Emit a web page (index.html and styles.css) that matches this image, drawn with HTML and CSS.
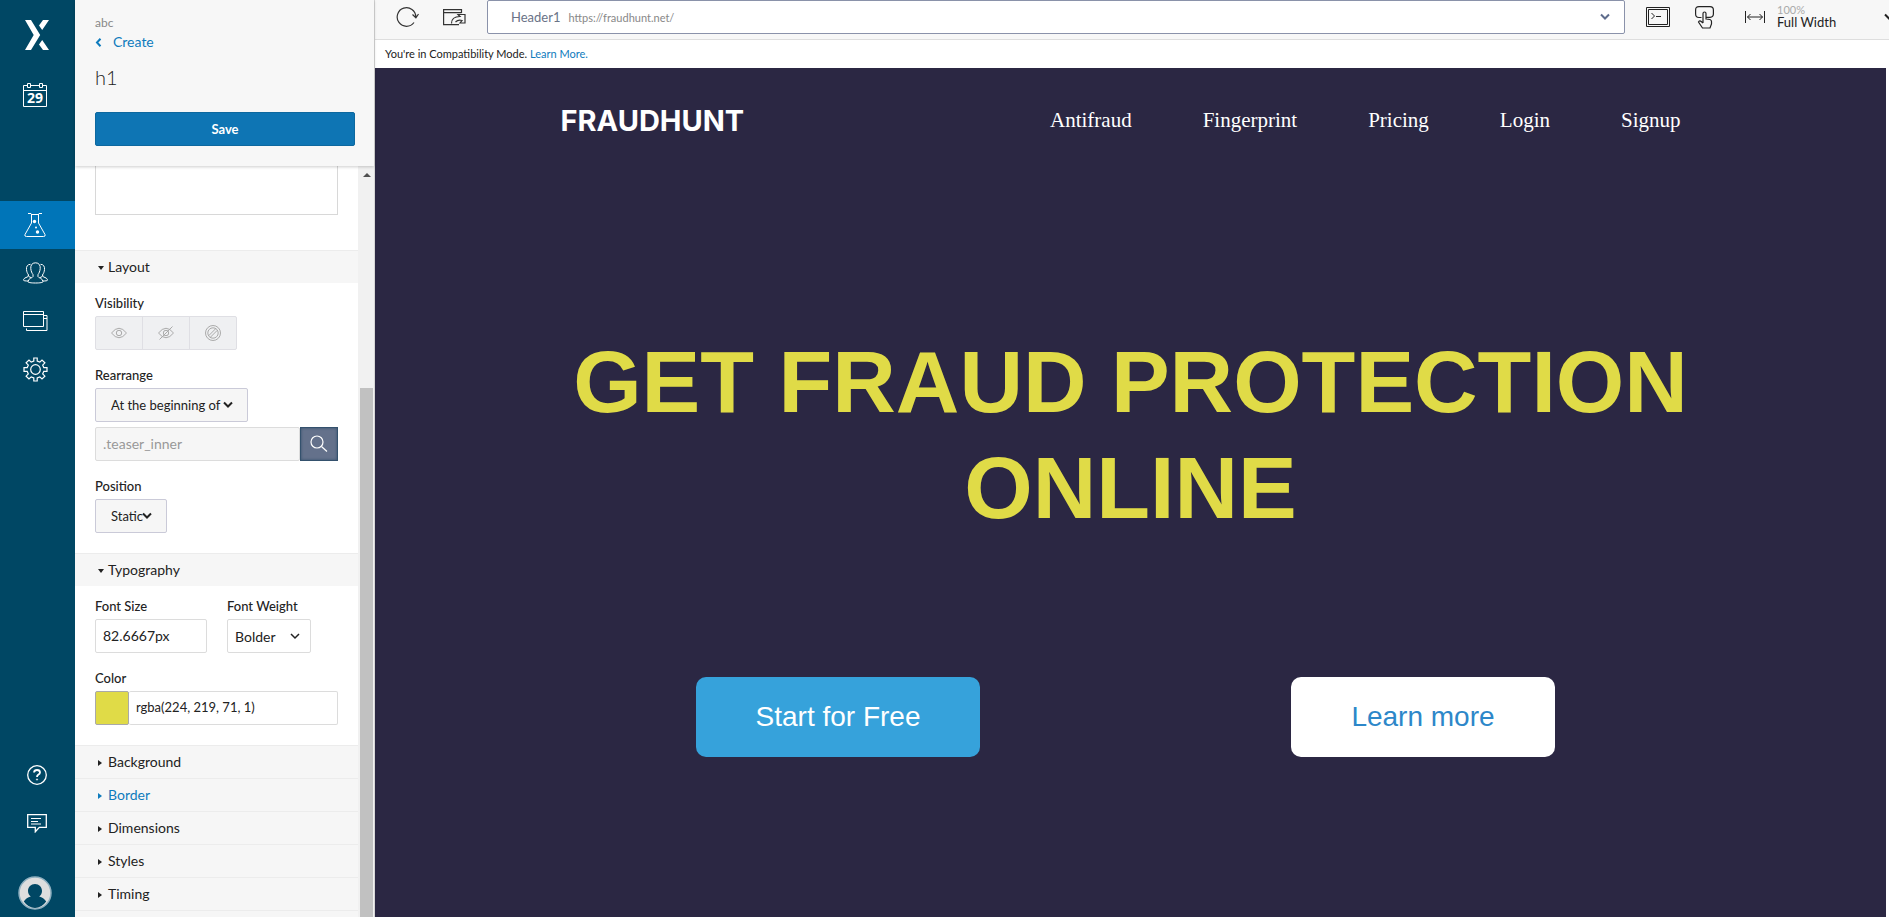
FILE: index.html
```
<!DOCTYPE html>
<html lang="en">
<head>
    <meta charset="UTF-8">
    <meta name="viewport" content="width=device-width, initial-scale=1.0">
    <title>Create - h1</title>
    <link rel="stylesheet" href="styles.css">
</head>
<body>
    <nav class="sidebar" aria-label="Main">
        <a class="logo" href="#" aria-label="Home">
            <svg width="24" height="30" viewBox="0 0 24 30" fill="#fff"><path d="M0 0h6L15.200 15 6 30H0l8.700-15zM18 0h6l-6.800 10-3.200-4.500zM18 30h6l-6.800-10-3.200 4.500z"/></svg>
        </a>
        <a class="calendar" href="#" aria-label="Calendar">
            <svg width="24" height="25" viewBox="0 0 24 25" fill="none" stroke="#fff"><path d="M4.500 2.500h-4v21h23v-21h-4M7.500 2.500h9M.5 7.500h23M4.500.5h3v4h-3zM16.500.5h3v4h-3z"/><text class="calendar-day" x="12" y="20" text-anchor="middle">29</text></svg>
        </a>
        <a class="side-link active" href="#" aria-label="Experiments">
            <svg width="24" height="26" viewBox="0 0 24 26" fill="none" stroke="#fff"><path d="M5 1.500h3l1 1h6l1-1h3M8.500 2v9L2 22.500q-.8 2 1.500 2h17q2.300 0 1.500-2L15.500 11V2"/><g fill="#fff" stroke="none"><circle cx="11.500" cy="9.500" r="1.700"/><circle cx="13" cy="15.500" r="1"/><circle cx="14.500" cy="20" r="1.700"/></g></svg>
        </a>
        <a class="side-link" href="#" aria-label="Audiences">
            <svg width="25" height="22" viewBox="0 0 25 22" fill="none" stroke="#fff"><path d="M12.500.8c3.500 0 5 2.500 4.700 5.800-.2 2.500-1.200 4.700-2.200 6v2c0 1.200 5 1.500 5 5.200 0 .7-3 1.200-7.500 1.200S5 20.500 5 19.800c0-3.700 5-4 5-5.200v-2c-1-1.300-2-3.500-2.200-6C7.500 3.300 9 .8 12.500.8z"/><path d="M7.500 2.300C4.500 2.300 3.200 4.500 3.500 7.500c.2 2.500 1 4 1.800 5 .2 2-.3 2.300-2.300 3-1.500.6-2.500 1.500-2.500 2.700 0 .6 2 .8 4.500.8M17.500 2.300c3 0 4.300 2.200 4 5.200-.2 2.500-1 4-1.800 5-.2 2 .3 2.300 2.300 3 1.500.6 2.500 1.500 2.500 2.700 0 .6-2 .8-4.500.8M5.300 12.500c0 2.500 1.200 2.500 2.700 3M19.700 12.500c0 2.500-1.200 2.500-2.700 3"/></svg>
        </a>
        <a class="side-link" href="#" aria-label="Pages">
            <svg width="25" height="21" viewBox="0 0 25 21" fill="none" stroke="#fff"><path d="M.5.500h20v15H.5zM.5 3.500h20M21 4.500h3v15H3.500v-2M21 7.500h3"/></svg>
        </a>
        <a class="side-link" href="#" aria-label="Settings">
            <svg width="25" height="25" viewBox="0 0 25 25" fill="none" stroke="#fff" stroke-width="1.200"><path d="M10.800 1h3.400v3l2.600 1.100L19 3l2.900 2.800-2.200 2.300 1.100 2.600h3.200v3.600h-3.200l-1.100 2.600 2.200 2.300L19 22l-2.200-2.100-2.600 1.100v3h-3.400v-3l-2.600-1.100L6 22l-2.900-2.800 2.200-2.300-1.100-2.600H1v-3.600h3.200l1.100-2.600-2.200-2.300L6 3l2.200 2.100L10.800 4z"/><circle cx="12.500" cy="12.500" r="4.800"/></svg>
        </a>
        <div class="sidebar-bottom">
            <a class="bottom-link" href="#" aria-label="Help">
                <svg width="20" height="20" viewBox="0 0 20 20" fill="none" stroke="#fff"><circle cx="10" cy="10" r="9.300" stroke-width="1.300"/><path d="M7 7.500Q7.300 5 10 5q3 0 3 2.500 0 1.300-1.800 2.300Q10 10.600 10 12" stroke-width="1.800"/><circle cx="10" cy="14.500" r=".6"/></svg>
            </a>
            <a class="bottom-link" href="#" aria-label="Feedback">
                <svg width="20" height="19" viewBox="0 0 20 19" fill="none" stroke="#fff"><path d="M.7.700h18.600v12.600h-7l-4 4.500v-4.500H.7z" stroke-width="1.300"/><path d="M4 4.500h10M4 7.500h7M4 10h10"/></svg>
            </a>
            <a class="avatar" href="#" aria-label="Account">
                <svg width="34" height="34" viewBox="0 0 34 34"><circle cx="17" cy="17" r="16" fill="#dedede" stroke="#8fb0c0" stroke-width="1.500"/><path fill="#004764" d="M17 8c4 0 7 3 7 7 0 2.500-1.200 4.200-2.800 5.500 3 .8 5.300 2.200 7 5Q23.500 32 17 32T5.800 25.500c1.700-2.800 4-4.200 7-5C11.200 19.200 10 17.500 10 15c0-4 3-7 7-7z"/></svg>
            </a>
        </div>
    </nav>

    <aside class="panel">
        <header class="panel-header">
            <div class="project">abc</div>
            <a class="back" href="#"><svg width="7" height="9" viewBox="0 0 7 9" fill="none" stroke="currentColor" stroke-width="2"><path d="M5.500.8 2 4.500l3.500 3.700"/></svg>Create</a>
            <h2 class="element-name">h1</h2>
            <button class="save" type="button">Save</button>
        </header>
        <div class="panel-body">
            <form class="panel-content">
                <textarea class="html-box" aria-label="HTML"></textarea>

                <button class="section-title" type="button"><span class="arrow down"></span>Layout</button>
                <div class="section">
                    <div class="field">
                        <div class="label">Visibility</div>
                        <div class="button-group">
                            <button type="button" aria-label="Visible"><svg width="16" height="16" viewBox="0 0 16 16" fill="none" stroke="#aaa"><path d="M.5 8Q8-1.500 15.500 8 8 17.500.5 8z"/><circle cx="8" cy="8" r="2.700"/></svg></button>
                            <button type="button" aria-label="Invisible"><svg width="16" height="16" viewBox="0 0 16 16" fill="none" stroke="#aaa"><path d="M.5 8Q8-1.500 15.500 8 8 17.500.5 8zM1.500 14.500l13-13"/><circle cx="8" cy="8" r="2.700"/></svg></button>
                            <button type="button" aria-label="Removed"><svg width="16" height="16" viewBox="0 0 16 16" fill="none" stroke="#aaa"><circle cx="8" cy="8" r="7.500"/><circle cx="8" cy="8" r="5.200"/><path d="M3.700 10.700l7-7M5.300 12.300l7-7"/></svg></button>
                        </div>
                    </div>
                    <div class="field">
                        <label class="label" for="rearrange">Rearrange</label>
                        <select class="dropdown" id="rearrange"><option>At the beginning of</option></select>
                        <div class="selector-row">
                            <input type="text" placeholder=".teaser_inner" aria-label="Selector">
                            <button type="button" aria-label="Pick element"><svg width="18" height="18" viewBox="0 0 18 18" fill="none" stroke="#fff" stroke-width="1.200"><circle cx="7" cy="7" r="6"/><path d="M11.500 11.500l5.500 5"/></svg></button>
                        </div>
                    </div>
                    <div class="field">
                        <label class="label" for="position">Position</label>
                        <select class="dropdown short" id="position"><option>Static</option></select>
                    </div>
                </div>

                <button class="section-title" type="button"><span class="arrow down"></span>Typography</button>
                <div class="section">
                    <div class="field-row">
                        <div class="field">
                            <label class="label" for="font-size">Font Size</label>
                            <input class="text-input" type="text" id="font-size" value="82.6667px">
                        </div>
                        <div class="field">
                            <label class="label" for="font-weight">Font Weight</label>
                            <select class="weight" id="font-weight"><option>Bolder</option></select>
                        </div>
                    </div>
                    <div class="field">
                        <label class="label" for="color">Color</label>
                        <div class="color-row">
                            <button class="swatch" type="button" aria-label="Pick color"></button>
                            <input type="text" id="color" value="rgba(224, 219, 71, 1)">
                        </div>
                    </div>
                </div>

                <button class="section-title" type="button"><span class="arrow"></span>Background</button>
                <button class="section-title current" type="button"><span class="arrow"></span>Border</button>
                <button class="section-title" type="button"><span class="arrow"></span>Dimensions</button>
                <button class="section-title" type="button"><span class="arrow"></span>Styles</button>
                <button class="section-title" type="button"><span class="arrow"></span>Timing</button>
                <div class="panel-end"></div>
            </form>
            <div class="scrollbar"><span class="scroll-up"></span><span class="scroll-thumb"></span></div>
        </div>
    </aside>

    <main class="editor">
        <div class="toolbar">
            <button class="tool reload" type="button" aria-label="Reload"><svg width="24" height="22" viewBox="0 0 24 22" fill="none" stroke="#333" stroke-width="1.200"><path d="M18 16.500A9.300 9.300 0 1 1 19.800 11M16.500 8.500l3.400 3.300L22.500 8"/></svg></button>
            <button class="tool" type="button" aria-label="Redirect"><svg width="23" height="17" viewBox="0 0 23 17" fill="none" stroke="#333" stroke-width="1.200"><path d="M18.500 4V.6H.6v15H16M.6 3.600h18M8.500 14.500q0-7 8.500-7l-2-2h7v8.500h-5l2-2.500q-4-1-6.500 1.500"/></svg></button>
            <button class="address" type="button">
                <span class="page-name">Header1</span>
                <span class="page-url">https://fraudhunt.net/</span>
                <svg width="12" height="8" viewBox="0 0 12 8" fill="none" stroke="#5e6c8c" stroke-width="2"><path d="M2 1.500l4 4 4-4"/></svg>
            </button>
            <button class="tool console" type="button" aria-label="Code"><svg width="24" height="20" viewBox="0 0 24 20" fill="none" stroke="#222"><path d="M.5.500h23v19H.5zM2.500 2.500h19v15h-19z"/><path d="M5.500 6l3 3-3 3M10 9.500h5"/></svg></button>
            <button class="tool hand" type="button" aria-label="Interactive mode"><svg width="20" height="23" viewBox="0 0 20 23" fill="none" stroke="#222" stroke-width="1.200"><path d="M6.500 11.500H4Q.6 11.500.6 8V4Q.6.600 4 .6h11Q18.400.6 18.400 4v4q0 3-3.400 3.300h-3.500M8 17V7.500q0-1.500 1.500-1.500T11 7.500V13q5.500 0 5.500 2.500V18l-1.500 4H7.500L3.500 16q1-2 3-.3L8 17"/></svg></button>
            <button class="tool" type="button" aria-label="Width"><svg width="20" height="12" viewBox="0 0 20 12" fill="none" stroke="#222"><path d="M.5 0v12M19.500 0v12M2.500 6h15M5.500 3l-3 3 3 3M14.500 3l3 3-3 3"/></svg></button>
            <div class="viewport-size"><span class="percent">100%</span><span>Full Width</span></div>
            <button class="tool more" type="button" aria-label="More"><svg width="12" height="8" viewBox="0 0 12 8" fill="none" stroke="#222" stroke-width="2"><path d="M2 1.500l4 4 4-4"/></svg></button>
        </div>
        <div class="notice">You're in Compatibility Mode. <a href="#">Learn More.</a></div>
        <div class="preview">
            <div class="site">
                <header class="site-header">
                    <a class="brand" href="#">FRAUDHUNT</a>
                    <nav class="site-nav">
                        <a href="#">Antifraud</a>
                        <a href="#">Fingerprint</a>
                        <a href="#">Pricing</a>
                        <a href="#">Login</a>
                        <a href="#">Signup</a>
                    </nav>
                </header>
                <h1>GET FRAUD PROTECTION ONLINE</h1>
                <div class="actions">
                    <a class="btn start" href="#">Start for Free</a>
                    <a class="btn learn" href="#">Learn more</a>
                </div>
            </div>
        </div>
    </main>
</body>
</html>
```
FILE: styles.css
```
* {
    box-sizing: border-box;
}

body {
    display: flex;
    height: 100vh;
    margin: 0;
    overflow: hidden;
    font-family: Lato, sans-serif;
    font-size: 14px;
    color: #222;
}

a {
    color: #0e7bbd;
    text-decoration: none;
}

button,
input,
select,
textarea {
    margin: 0;
    font-family: inherit;
    font-size: 14px;
    color: inherit;
}

button {
    padding: 0;
    cursor: pointer;
}

svg {
    display: block;
    flex: none;
}

/* Sidebar */
.sidebar {
    display: flex;
    flex: none;
    flex-direction: column;
    width: 75px;
    background-color: #004764;
}

.sidebar a {
    display: flex;
    align-items: center;
    padding-left: 23px;
}

.sidebar .logo {
    padding: 20px 0 0 25px;
}

.calendar {
    margin: 33px 0 93px;
}

.calendar-day {
    fill: #fff;
    stroke: none;
    font-family: "Open Sans", sans-serif;
    font-size: 14px;
    font-weight: bold;
}

.side-link {
    height: 48px;
}

.side-link.active {
    background-color: #0075b8;
}

.sidebar-bottom {
    display: flex;
    flex-direction: column;
    margin-top: auto;
    padding-bottom: 7px;
}

.sidebar .bottom-link {
    height: 48px;
    padding-left: 27px;
}

.sidebar .avatar {
    margin-top: 29px;
    padding-left: 18px;
}

/* Settings panel */
.panel {
    display: flex;
    flex: none;
    flex-direction: column;
    width: 300px;
    border-right: 1px solid #d6d6d6;
}

.panel-header {
    z-index: 1;
    height: 166px;
    padding: 15px 19px 0 20px;
    background-color: #f7f7f7;
    box-shadow: 0 1px 3px rgba(0, 0, 0, 0.2);
}

.project {
    font-size: 12px;
    line-height: 16px;
    color: #888;
}

.back {
    display: flex;
    align-items: center;
    gap: 11px;
    line-height: 22px;
}

.element-name {
    margin: 9px 0 20px;
    font-size: 20px;
    font-weight: 300;
    line-height: 30px;
}

.save {
    width: 100%;
    height: 34px;
    border: 1px solid #0d689f;
    border-radius: 2px;
    background-color: #0e75b4;
    font-size: 13px;
    font-weight: bold;
    color: #fff;
}

.panel-body {
    display: flex;
    flex: 1;
    min-height: 0;
}

.panel-content {
    flex: 1;
    overflow: hidden;
}

.html-box {
    display: block;
    width: 243px;
    height: 49px;
    margin: 0 20px 35px;
    border: 1px solid #d8d8d8;
    border-top: none;
    resize: none;
}

.section-title {
    display: flex;
    align-items: center;
    width: 100%;
    height: 33px;
    padding: 0 0 2px 23px;
    border: none;
    border-top: 1px solid #ececec;
    background-color: #f6f6f6;
}

.section-title.current {
    color: #0e7bbd;
}

.panel-end {
    height: 33px;
    border-top: 1px solid #ececec;
    background-color: #f6f6f6;
}

.arrow {
    width: 10px;
    padding-top: 3px;
}

.arrow::before {
    content: "";
    display: block;
    width: 0;
    border: 3px solid transparent;
    border-left: 4px solid currentColor;
    border-right: none;
}

.arrow.down::before {
    border: 3px solid transparent;
    border-top: 4px solid currentColor;
    border-bottom: none;
}

.section {
    display: flex;
    flex-direction: column;
    gap: 16px;
    padding: 11px 20px 20px;
}

.label {
    display: block;
    margin-bottom: 4px;
    font-size: 13px;
    font-weight: 500;
    line-height: 18px;
}

.button-group {
    display: flex;
}

.button-group button {
    display: flex;
    align-items: center;
    justify-content: center;
    width: 48px;
    height: 34px;
    margin-right: -1px;
    border: 1px solid #dfdfe4;
    background-color: #eff0f2;
}

.button-group button:first-child {
    border-radius: 2px 0 0 2px;
}

.button-group button:last-child {
    border-radius: 0 2px 2px 0;
}

.dropdown,
.weight {
    display: block;
    height: 34px;
    appearance: none;
    border-radius: 2px;
    background-repeat: no-repeat;
}

.dropdown {
    width: 153px;
    padding: 0 15px;
    border: 1px solid #cacad8;
    background-color: #f6f6f6;
    background-image: url("data:image/svg+xml,%3Csvg xmlns='http://www.w3.org/2000/svg' width='10' height='8' fill='none' stroke='%23222' stroke-width='2'%3E%3Cpath d='M1 1.500l4 4 4-4'/%3E%3C/svg%3E");
    background-position: right 14px center;
    font-size: 13px;
}

.dropdown.short {
    width: 72px;
}

.selector-row,
.color-row {
    display: flex;
}

.selector-row {
    margin-top: 5px;
}

.selector-row input,
.text-input,
.color-row input {
    min-width: 0;
    height: 34px;
    padding: 0 7px 2px;
    border: 1px solid #dcdcdc;
    border-radius: 2px;
}

.selector-row input {
    flex: 1;
    background-color: #f6f6f6;
}

.selector-row input::placeholder {
    color: #999;
}

.selector-row button {
    display: flex;
    align-items: center;
    justify-content: center;
    width: 38px;
    border: 1px solid #34516d;
    background-color: #64718b;
    box-shadow: inset 0 0 3px #34516d;
}

.field-row {
    display: flex;
    gap: 20px;
}

.text-input {
    width: 112px;
}

.weight {
    width: 84px;
    padding: 0 7px;
    border: 1px solid #dcdcdc;
    background-color: #fff;
    background-image: url("data:image/svg+xml,%3Csvg xmlns='http://www.w3.org/2000/svg' width='10' height='7' fill='none' stroke='%23222' stroke-width='1.500'%3E%3Cpath d='M1 1l4 4 4-4'/%3E%3C/svg%3E");
    background-position: right 10px center;
}

.swatch {
    width: 34px;
    border: 1px solid #a9a9a9;
    border-radius: 2px;
    background-color: #e0db47;
}

.color-row input {
    flex: 1;
    border-left: none;
    font-size: 13px;
}

.scrollbar {
    display: flex;
    flex: none;
    flex-direction: column;
    width: 16px;
    padding: 7px 1px 0 2px;
    background-color: #f1f1f1;
}

.scroll-up {
    align-self: center;
    margin-bottom: 211px;
    border: 4px solid transparent;
    border-top: none;
    border-bottom-color: #505050;
}

.scroll-thumb {
    flex: 1;
    background-color: #c1c1c1;
}

/* Editor */
.editor {
    display: flex;
    flex: 1;
    flex-direction: column;
    min-width: 0;
}

.toolbar {
    display: flex;
    align-items: flex-start;
    height: 40px;
    padding-left: 21px;
    overflow: hidden;
    border-bottom: 1px solid #dedede;
    background-color: #f7f7f7;
}

.tool {
    display: flex;
    flex: none;
    align-items: center;
    height: 34px;
    border: none;
    background: none;
}

.reload {
    margin-right: 23px;
}

.address {
    display: flex;
    flex: 1;
    align-items: center;
    gap: 8px;
    min-width: 0;
    height: 34px;
    margin: 0 21px;
    padding: 0 13px 0 23px;
    border: 1px solid #8a92aa;
    border-radius: 2px;
    background-color: #fff;
    color: #6a7387;
}

.address svg {
    margin-left: auto;
}

.page-name {
    font-size: 13px;
}

.page-url {
    font-size: 11px;
    color: #888;
}

.console {
    margin-right: 25px;
}

.hand {
    margin-right: 30px;
}

.viewport-size {
    display: flex;
    flex: none;
    flex-direction: column;
    width: 106px;
    margin-left: 12px;
    padding-top: 4px;
    font-size: 13px;
    line-height: 12px;
}

.percent {
    font-size: 11px;
    color: #aaa;
}

.more {
    width: 6px;
    overflow: hidden;
}

.notice {
    height: 28px;
    padding-left: 10px;
    font-size: 11px;
    line-height: 27px;
}

.preview {
    flex: 1;
    min-height: 0;
    margin-right: 3px;
    overflow: hidden;
    background-color: #2b2743;
}

.site {
    max-width: 1170px;
    margin: 0 auto;
    font-family: "Liberation Sans", Arial, sans-serif;
}

.site-header {
    display: flex;
    align-items: center;
    justify-content: space-between;
    height: 105px;
    padding: 0 35px 0 15px;
}

.brand {
    font-family: Inter, sans-serif;
    font-size: 29px;
    font-weight: bold;
    color: #fff;
}

.site-nav {
    display: flex;
    gap: 71px;
    font-family: "Liberation Serif", "Times New Roman", serif;
    font-size: 21px;
}

.site-nav a {
    color: #fff;
}

h1 {
    margin: 156px 0 136px;
    font-size: 88px;
    font-weight: bold;
    line-height: 106px;
    text-align: center;
    color: #e0db47;
}

.actions {
    display: grid;
    grid-template-columns: 1fr 1fr;
    justify-items: center;
}

.btn {
    padding: 0 60px;
    border-radius: 10px;
    font-size: 28px;
    line-height: 80px;
}

.start {
    background-color: #36a2db;
    color: #fff;
}

.learn {
    background-color: #fff;
    color: #2d87c9;
}
```
